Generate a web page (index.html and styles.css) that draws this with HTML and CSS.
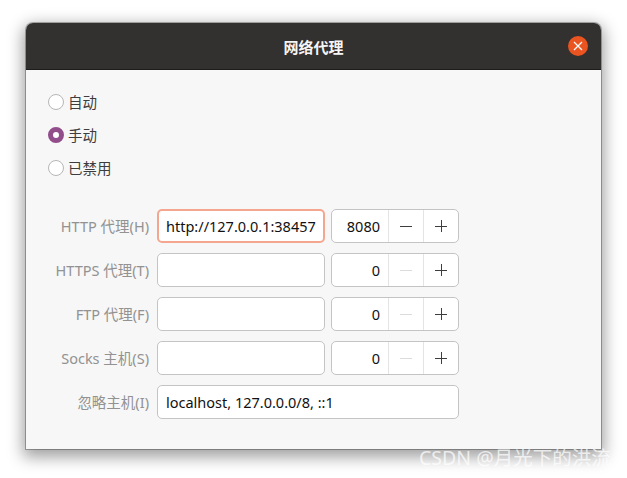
FILE: index.html
```html
<!DOCTYPE html>
<html lang="zh-CN">
<head>
<meta charset="utf-8">
<title>网络代理</title>
<link rel="stylesheet" href="styles.css">
</head>
<body>
<div class="window">
  <header class="titlebar">
    <span class="title">网络代理</span>
    <button class="close" aria-label="关闭">
      <svg width="10" height="10" viewBox="0 0 10 10"><path d="M1 1L9 9M9 1L1 9" stroke="#fff" stroke-width="1.2" fill="none"/></svg>
    </button>
  </header>
  <main class="content">
    <div class="radios">
      <label class="radio"><span class="dot"></span><span>自动</span></label>
      <label class="radio"><span class="dot on"></span><span>手动</span></label>
      <label class="radio"><span class="dot"></span><span>已禁用</span></label>
    </div>
    <div class="form">
      <span class="label">HTTP 代理(H)</span>
      <div class="entry focus">http://127.0.0.1:38457</div>
      <div class="spin">
        <span class="num">8080</span>
        <span class="btn"><svg width="12" height="12" viewBox="0 0 12 12"><path d="M0 6.5H12" stroke="#3d3d3d"/></svg></span>
        <span class="btn"><svg width="12" height="12" viewBox="0 0 12 12"><path d="M0 6.5H12M6.5 0V12" stroke="#3d3d3d"/></svg></span>
      </div>
      <span class="label">HTTPS 代理(T)</span>
      <div class="entry"></div>
      <div class="spin">
        <span class="num">0</span>
        <span class="btn"><svg width="12" height="12" viewBox="0 0 12 12"><path d="M0 6.5H12" stroke="#dcdcdc"/></svg></span>
        <span class="btn"><svg width="12" height="12" viewBox="0 0 12 12"><path d="M0 6.5H12M6.5 0V12" stroke="#3d3d3d"/></svg></span>
      </div>
      <span class="label">FTP 代理(F)</span>
      <div class="entry"></div>
      <div class="spin">
        <span class="num">0</span>
        <span class="btn"><svg width="12" height="12" viewBox="0 0 12 12"><path d="M0 6.5H12" stroke="#dcdcdc"/></svg></span>
        <span class="btn"><svg width="12" height="12" viewBox="0 0 12 12"><path d="M0 6.5H12M6.5 0V12" stroke="#3d3d3d"/></svg></span>
      </div>
      <span class="label">Socks 主机(S)</span>
      <div class="entry"></div>
      <div class="spin">
        <span class="num">0</span>
        <span class="btn"><svg width="12" height="12" viewBox="0 0 12 12"><path d="M0 6.5H12" stroke="#dcdcdc"/></svg></span>
        <span class="btn"><svg width="12" height="12" viewBox="0 0 12 12"><path d="M0 6.5H12M6.5 0V12" stroke="#3d3d3d"/></svg></span>
      </div>
      <span class="label">忽略主机(I)</span>
      <div class="entry wide">localhost, 127.0.0.0/8, ::1</div>
    </div>
  </main>
</div>
<div class="watermark">CSDN @月光下的洪流</div>
</body>
</html>
```
FILE: styles.css
```css
* { box-sizing: border-box; }
html, body { margin: 0; height: 100%; background: #fff; overflow: hidden; }
body {
  position: relative;
  padding: 23px 26px;
  font-family: "Noto Sans", "Noto Sans CJK SC", sans-serif;
  font-size: 14.5px;
  color: #3d3d3d;
}
.window {
  width: 575px;
  height: 426px;
  border-radius: 7px 7px 0 0;
  background: #f7f7f7;
  box-shadow: 0 0 0 1px rgba(0,0,0,.28), 0 5px 16px 3px rgba(0,0,0,.38);
  overflow: hidden;
  display: flex;
  flex-direction: column;
}
.titlebar {
  height: 47px;
  flex: none;
  background: #333030;
  border-bottom: 1px solid #1f1c1c;
  display: flex;
  align-items: center;
  justify-content: center;
  position: relative;
}
.title { color: #f5f5f5; font-weight: 700; font-size: 15px; }
.close {
  position: absolute;
  right: 13px;
  top: 13px;
  width: 20px;
  height: 20px;
  padding: 0;
  border: 0;
  border-radius: 50%;
  background: #e95420;
  display: flex;
  align-items: center;
  justify-content: center;
}
.content { padding: 22px 22px 0; }
.radios { display: flex; flex-direction: column; gap: 13px; }
.radio { display: flex; align-items: center; gap: 4px; height: 20px; line-height: 20px; }
.dot {
  width: 16px;
  height: 16px;
  border-radius: 50%;
  background: #fff;
  border: 1px solid #b6b6b6;
}
.dot.on { background: #fff; border: 5px solid #924d8b; }
.form {
  margin-top: 31px;
  display: grid;
  grid-template-columns: 103px 168px 128px;
  grid-auto-rows: 34px;
  column-gap: 6px;
  row-gap: 10px;
  align-items: center;
  width: max-content;
}
.label {
  text-align: right;
  color: #929292;
  font-size: 14.5px;
  white-space: nowrap;
  padding: 0 2px 2px 0;
}
.entry {
  height: 34px;
  background: #fff;
  border: 1px solid #c4c4c4;
  border-radius: 5px;
  padding: 0 8px;
  line-height: 32px;
  color: #111;
  white-space: nowrap;
  overflow: hidden;
}
.entry.focus { border: 2px solid #f4a78e; line-height: 30px; padding: 0 7px; }
.entry.wide { grid-column: span 2; }
.spin {
  height: 34px;
  background: #fff;
  border: 1px solid #c4c4c4;
  border-radius: 5px;
  display: flex;
  align-items: stretch;
}
.num { flex: 1; text-align: right; padding-right: 8px; line-height: 32px; color: #111; }
.btn {
  width: 35px;
  flex: none;
  border-left: 1px solid #e4e4e4;
  display: flex;
  align-items: center;
  justify-content: center;
}
.watermark {
  position: absolute;
  left: 419px;
  top: 442px;
  color: rgba(255,255,255,.72);
  font-size: 19.5px;
  white-space: nowrap;
}
```
